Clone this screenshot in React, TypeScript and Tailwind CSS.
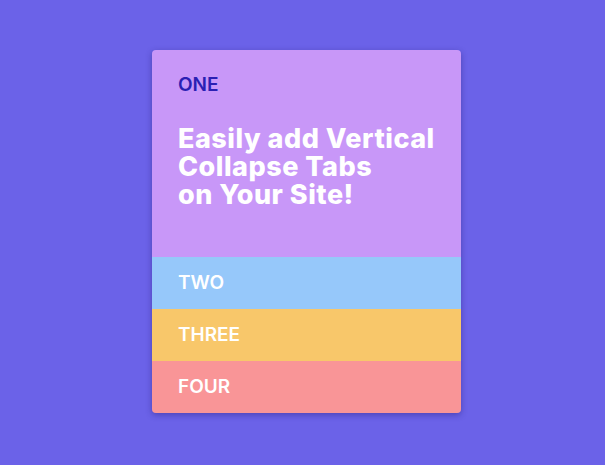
export default function App() {
  const font = { fontFamily: '"Inter", "Noto Sans", sans-serif' };
  return (
    <div className="w-[605px] h-[465px] bg-[#6b62e8] flex items-start justify-center pt-[50px] pl-[8px]" style={font}>
      <div className="w-[309px] rounded-[4px] overflow-hidden shadow-[0_2px_6px_rgba(40,30,120,0.45)] flex flex-col">
        <div className="h-[207px] bg-[#c897f8] pl-[26px] pt-[23px]">
          <div className="text-[19px] leading-[24px] font-semibold text-[#2b1fb3]">ONE</div>
          <div className="mt-[28px] text-[27px] leading-[28px] font-extrabold text-white tracking-[0.5px]">
            Easily add Vertical<br />Collapse Tabs<br />on Your Site!
          </div>
        </div>
        <div className="h-[52px] bg-[#96c8fa] pl-[26px] flex items-center text-[19px] font-semibold text-white">TWO</div>
        <div className="h-[52px] bg-[#f8c76a] pl-[26px] flex items-center text-[19px] font-semibold text-white">THREE</div>
        <div className="h-[52px] bg-[#f99597] pl-[26px] flex items-center text-[19px] font-semibold text-white">FOUR</div>
      </div>
    </div>
  );
}
